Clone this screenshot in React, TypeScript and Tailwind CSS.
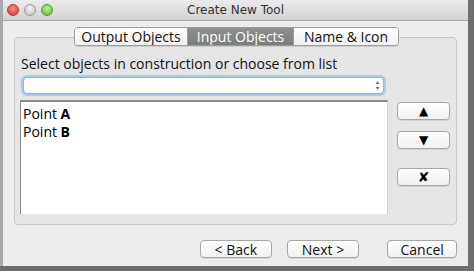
export default function App() {
  const font = { fontFamily: '"Lucida Grande", "DejaVu Sans", sans-serif' };
  const btn =
    "flex items-center justify-center rounded-[4px] border border-[#a6a6a6] bg-gradient-to-b from-white to-[#f1f1f1] shadow-[0_1px_0_rgba(0,0,0,0.08)]";
  return (
    <div className="w-[474px] h-[271px] bg-[#6f6f6f] overflow-hidden" style={font}>
      <div className="w-[468px] h-[266px] bg-[#ececec] border-l-[3px] border-[#a9a9a9] flex flex-col">
        {/* title bar */}
        <div className="relative h-[21px] bg-gradient-to-b from-[#ebebeb] to-[#d2d2d2] border-b border-[#a8a8a8] flex items-center justify-center">
          <div className="absolute left-[4px] top-[4px] flex gap-[5px]">
            <span className="w-[12px] h-[12px] rounded-full bg-[radial-gradient(circle_at_50%_35%,#ff8a80,#d9342b)] border border-[#b23b33]" />
            <span className="w-[12px] h-[12px] rounded-full bg-[radial-gradient(circle_at_50%_35%,#f4f4f4,#bdbdbd)] border border-[#9c9c9c]" />
            <span className="w-[12px] h-[12px] rounded-full bg-[radial-gradient(circle_at_50%_35%,#b8ef96,#5bb534)] border border-[#4d9a2c]" />
          </div>
          <span className="text-[12px] text-[#333]">Create New Tool</span>
        </div>

        <div className="relative flex-1 px-[11px] pt-[16px]">
          {/* tab panel */}
          <div className="h-[188px] border border-[#c8c8c8] rounded-[4px] bg-[#e5e5e5] flex flex-col px-[5px] pt-[18px]">
            <div className="text-[14px] text-[#111] pl-[1px] leading-[16px]" style={{ fontFamily: '"Open Sans", sans-serif' }}>
              Select objects in construction or choose from list
            </div>
            <div className="mt-[5px] ml-[3px] w-[361px] h-[17px] rounded-[4px] border border-[#8fb4e0] bg-white shadow-[0_0_0_2px_#a9c9ef] relative">
              <span className="absolute right-[4px] top-[1px] flex flex-col items-center text-[6px] leading-[6px] text-[#555]">
                <span>▴</span>
                <span>▾</span>
              </span>
            </div>
            <div className="flex mt-[6px]">
              <div className="w-[368px] h-[114px] bg-white border-t-2 border-l border-[#8a8a8a] border-r border-r-[#d0d0d0] px-[2px] pt-[3px] text-[14px] leading-[18px] text-black" style={{ fontFamily: '"Open Sans", sans-serif' }}>
                <div>
                  Point <b>A</b>
                </div>
                <div>
                  Point <b>B</b>
                </div>
              </div>
              <div className="flex flex-col ml-[9px] pt-[2px]">
                <div className={`${btn} w-[53px] h-[18px] text-[12px]`}>▲</div>
                <div className={`${btn} w-[53px] h-[18px] text-[12px] mt-[11px]`}>▼</div>
                <div className={`${btn} w-[53px] h-[18px] text-[14px] mt-[19px] font-bold`}>✘</div>
              </div>
            </div>
          </div>

          {/* segmented tabs */}
          <div
            className="absolute left-[71px] top-[6px] flex h-[19px] rounded-[4px] border border-[#9c9c9c] overflow-hidden text-[14px] leading-[17px] shadow-[0_1px_0_rgba(0,0,0,0.1)]"
            style={{ fontFamily: '"Open Sans", sans-serif' }}
          >
            <div className="w-[113px] flex items-center justify-center bg-gradient-to-b from-white to-[#f0f0f0] text-[#111] border-r border-[#9c9c9c]">
              Output Objects
            </div>
            <div className="w-[106px] flex items-center justify-center bg-gradient-to-b from-[#8f8f8f] to-[#7d7d7d] text-white border-r border-[#9c9c9c]">
              Input Objects
            </div>
            <div className="w-[104px] flex items-center justify-center bg-gradient-to-b from-white to-[#f0f0f0] text-[#111]">
              Name &amp; Icon
            </div>
          </div>

          {/* bottom buttons */}
          <div className="flex mt-[15px] text-[14px] text-[#111]" style={{ fontFamily: '"Open Sans", sans-serif' }}>
            <div className={`${btn} ml-[186px] w-[72px] h-[18px]`}>&lt; Back</div>
            <div className={`${btn} ml-[15px] w-[73px] h-[18px]`}>Next &gt;</div>
            <div className={`${btn} ml-[28px] w-[70px] h-[18px]`}>Cancel</div>
          </div>
        </div>
      </div>
    </div>
  );
}
